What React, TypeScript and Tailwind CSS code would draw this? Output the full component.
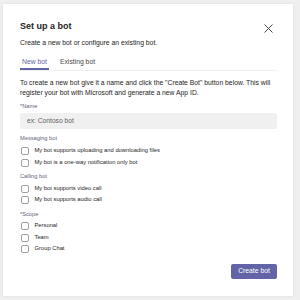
import { useState } from "react";

const font = { fontFamily: '"Liberation Sans", Arial, sans-serif' };

interface CheckProps {
  label: string;
}

const CheckRow = ({ label }: CheckProps) => {
  const [checked, setChecked] = useState(false);
  return (
    <label className="flex h-[11.7px] cursor-pointer items-center">
      <span
        onClick={() => setChecked(!checked)}
        className={
          "ml-[1px] box-border h-[8px] w-[8px] rounded-[2px] border border-[#a19f9d] " +
          (checked ? "bg-[#6264a7]" : "bg-white")
        }
      />
      <span className="ml-[5.5px] text-[5.8px] leading-none text-[#252423]">{label}</span>
    </label>
  );
};

const SectionLabel = ({ children }: { children: string }) => (
  <div className="h-[8px] text-[5.7px] leading-[8px] text-[#5f5f78]">{children}</div>
);

export default function App() {
  const [tab, setTab] = useState("new");
  return (
    <div className="h-[300px] w-[300px] bg-[#efefef] pl-[3px] pt-[4px]" style={font}>
      <div className="flex h-[292px] w-[290px] flex-col bg-white pl-[17px] pr-[16px] shadow-[0_0_3px_rgba(0,0,0,0.08)]">
        <div className="mt-[15px] flex h-[14px] items-center justify-between">
          <h1 className="text-[9px] font-bold leading-[14px] text-[#252423]">Set up a bot</h1>
          <svg
            className="mr-[4px] mt-[5px]"
            width="9"
            height="9"
            viewBox="0 0 9 9"
            fill="none"
            stroke="#484644"
            strokeWidth="1"
          >
            <path d="M0.5 0.5 L8.5 8.5 M8.5 0.5 L0.5 8.5" />
          </svg>
        </div>
        <p className="mt-[5px] h-[10px] text-[6.8px] leading-[10px] text-[#252423]">
          Create a new bot or configure an existing bot.
        </p>

        <div className="mt-[8px] flex border-b border-[#f0f0f0]">
          <button
            onClick={() => setTab("new")}
            className={
              "border-b-2 px-[2px] text-[6.8px] leading-[12px] " +
              (tab === "new" ? "border-[#6264a7] text-[#6264a7]" : "border-transparent text-[#484644]")
            }
          >
            New bot
          </button>
          <button
            onClick={() => setTab("existing")}
            className={
              "ml-[9px] border-b-2 px-[2px] text-[6.8px] leading-[12px] " +
              (tab === "existing" ? "border-[#6264a7] text-[#6264a7]" : "border-transparent text-[#484644]")
            }
          >
            Existing bot
          </button>
        </div>

        <p className="mt-[7px] text-[6.8px] leading-[9.5px] text-[#252423]">
          To create a new bot give it a name and click the "Create Bot" button below. This will register
          your bot with Microsoft and generate a new App ID.
        </p>

        <div className="mt-[4.5px]">
          <SectionLabel>*Name</SectionLabel>
        </div>
        <input
          className="mt-[3.3px] h-[16px] w-full rounded-[2px] bg-[#f0f0f0] px-[7px] text-[6.7px] text-[#252423] outline-none placeholder:text-[#616161]"
          placeholder="ex: Contoso bot"
        />

        <div className="mt-[5.7px]">
          <SectionLabel>Messaging bot</SectionLabel>
        </div>
        <div className="mt-[2.5px] flex flex-col">
          <CheckRow label="My bot supports uploading and downloading files" />
          <CheckRow label="My bot is a one-way notification only bot" />
        </div>

        <div className="mt-[3.5px]">
          <SectionLabel>Calling bot</SectionLabel>
        </div>
        <div className="mt-[2.9px] flex flex-col">
          <CheckRow label="My bot supports video call" />
          <CheckRow label="My bot supports audio call" />
        </div>

        <div className="mt-[3.4px]">
          <SectionLabel>*Scope</SectionLabel>
        </div>
        <div className="mt-[2.5px] flex flex-col">
          <CheckRow label="Personal" />
          <CheckRow label="Team" />
          <CheckRow label="Group Chat" />
        </div>

        <div className="mt-[8.7px] flex justify-end">
          <button className="h-[15.5px] w-[46px] rounded-[2px] bg-[#6264a7] text-[6.8px] text-white">
            Create bot
          </button>
        </div>
      </div>
    </div>
  );
}
